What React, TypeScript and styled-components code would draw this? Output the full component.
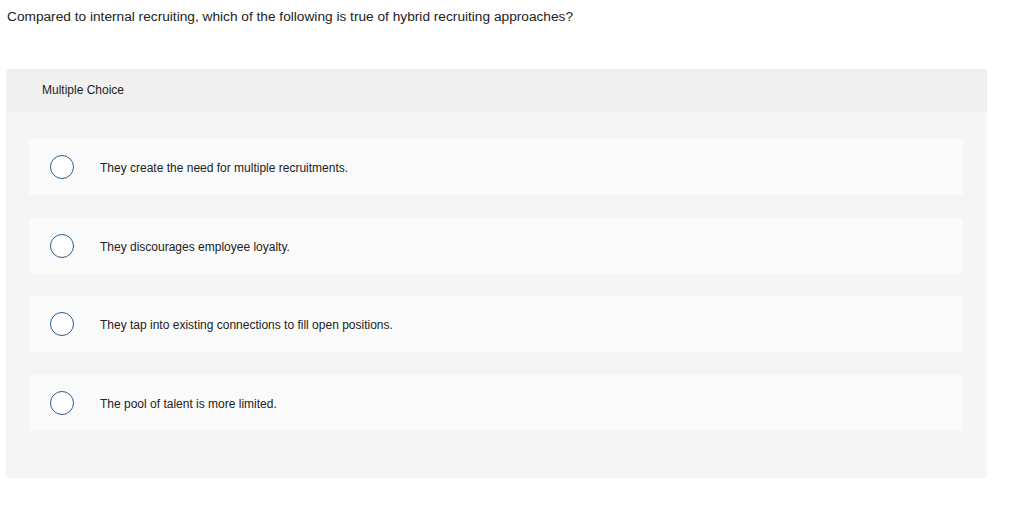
import React from "react";
import styled, { createGlobalStyle } from "styled-components";

const GlobalStyle = createGlobalStyle`
  html, body {
    margin: 0;
    padding: 0;
    background: #ffffff;
    font-family: "Liberation Sans", Arial, sans-serif;
    color: #222222;
  }
`;

const Page = styled.div`
  padding: 8px 37px 0 6px;
`;

const Question = styled.p`
  margin: 0 0 0 1px;
  font-size: 13.7px;
  line-height: 18px;
  color: #222;
`;

const Panel = styled.section`
  margin-top: 43px;
  background: #f5f5f5;
  border-radius: 3px;
  overflow: hidden;
`;

const PanelHeader = styled.header`
  height: 43px;
  display: flex;
  align-items: center;
  padding-left: 36px;
  padding-bottom: 1px;
  box-sizing: border-box;
  background: #f0f0f0;
  font-size: 12px;
  color: #222;
`;

const Choices = styled.div`
  display: flex;
  flex-direction: column;
  gap: 22.5px;
  padding: 27px 24px 47px 23px;
`;

const Choice = styled.label`
  height: 56px;
  display: flex;
  align-items: center;
  gap: 26px;
  padding-left: 21px;
  background: #fafafa;
  border-radius: 3px;
  font-size: 12px;
  color: #222;
  cursor: pointer;
`;

const Radio = styled.span`
  width: 22px;
  height: 22px;
  flex: none;
  border: 1px solid #2f5a92;
  border-radius: 50%;
  background: #fff;
`;

const ChoiceText = styled.span`
  padding-top: 2px;
`;

const options = [
  "They create the need for multiple recruitments.",
  "They discourages employee loyalty.",
  "They tap into existing connections to fill open positions.",
  "The pool of talent is more limited.",
];

export default function App() {
  return (
    <>
      <GlobalStyle />
      <Page>
        <Question>
          Compared to internal recruiting, which of the following is true of hybrid recruiting approaches?
        </Question>
        <Panel>
          <PanelHeader>Multiple Choice</PanelHeader>
          <Choices>
            {options.map((o) => (
              <Choice key={o}>
                <Radio />
                <ChoiceText>{o}</ChoiceText>
              </Choice>
            ))}
          </Choices>
        </Panel>
      </Page>
    </>
  );
}
